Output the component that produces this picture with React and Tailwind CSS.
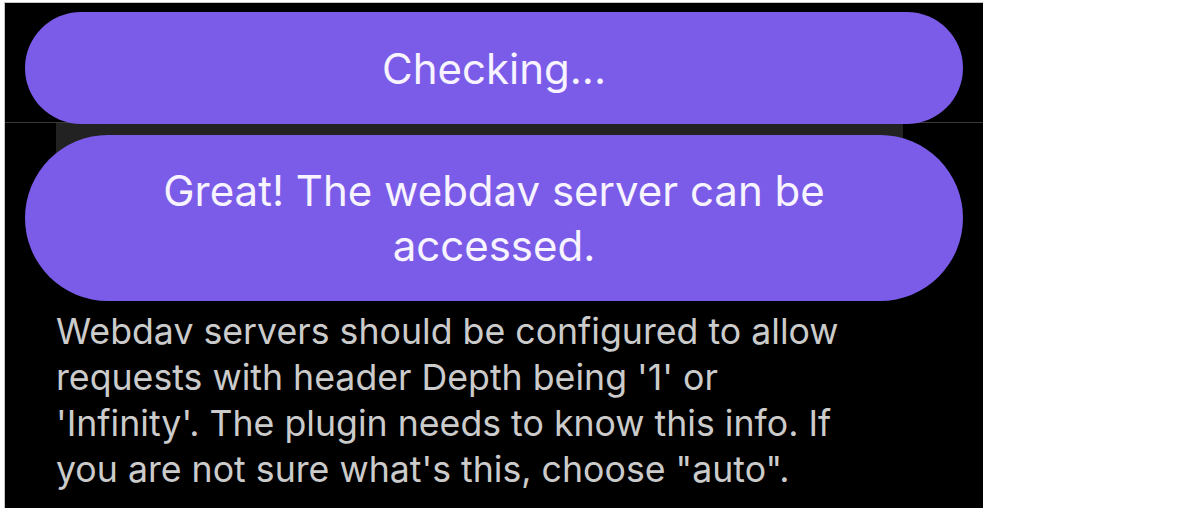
export default function App() {
  return (
    <div className="w-[1192px] h-[508px] bg-white overflow-hidden" style={{ fontFamily: "Inter, 'Noto Sans', sans-serif" }}>
      <div className="ml-[4px] mt-[2px] w-[979px] h-[506px] bg-black border-t border-l border-[#c4c4c4] px-[20px]">
        {/* checking toast */}
        <div className="-mx-[20px] px-[20px] pt-[9px] h-[120px] border-b border-[#3a3a3a]">
          <div className="relative z-10 h-[112px] rounded-full bg-[#7b5ce9] flex items-center justify-center text-[42px] text-[#f7f3ff]">
            Checking...
          </div>
        </div>

        {/* setting row behind the second toast */}
        <div className="ml-[31px] w-[847px] h-[40px] bg-[#222222]" />
        <div className="relative z-10 -mt-[28px] h-[166px] rounded-full bg-[#7b5ce9] flex items-center justify-center text-center text-[42px] leading-[55px] text-[#f7f3ff] px-[110px]">
          Great! The webdav server can be accessed.
        </div>

        <p className="ml-[31px] mt-[7px] w-[800px] text-[35.7px] leading-[46px] text-[#cbcbcb]">
          Webdav servers should be configured to allow requests with header Depth being '1' or 'Infinity'. The plugin needs to know this info. If you are not sure what's this, choose "auto".
        </p>
      </div>
    </div>
  );
}
